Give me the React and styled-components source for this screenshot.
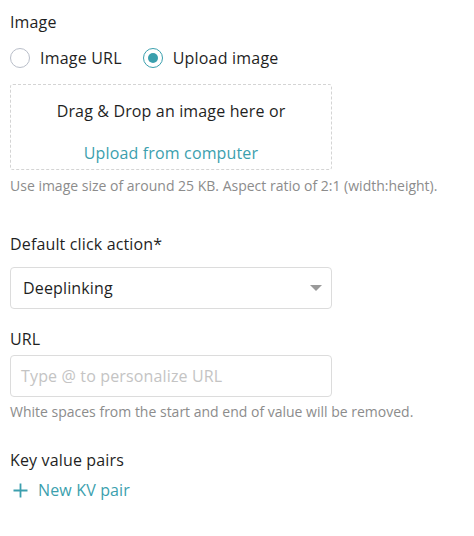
import React from "react";
import styled, { createGlobalStyle } from "styled-components";

const Global = createGlobalStyle`
  html, body { margin: 0; padding: 0; background: #fff; }
  body { font-family: "Open Sans", "Noto Sans", sans-serif; color: #1f1f1f; }
  * { box-sizing: border-box; }
`;

const Page = styled.div`
  width: 474px;
  height: 536px;
  padding: 12px 0 0 10px;
  display: flex;
  flex-direction: column;
`;

const Section = styled.div`
  display: flex;
  flex-direction: column;
  margin-top: ${(p) => p.$mt || 0}px;
`;

const Label = styled.div`
  font-size: 16px;
  line-height: 20px;
  letter-spacing: 0.15px;
  color: #1f1f1f;
  margin-bottom: ${(p) => p.$mb || 0}px;
`;

const RadioRow = styled.div`
  display: flex;
  align-items: center;
  gap: 21px;
  height: 32px;
  margin: 10px 0;
`;

const RadioOption = styled.label`
  display: flex;
  align-items: center;
  gap: 10px;
  font-size: 16px;
  line-height: 20px;
  letter-spacing: 0.2px;
  color: #1f1f1f;
`;

const RadioCircle = styled.span`
  width: 20px;
  height: 20px;
  border-radius: 50%;
  border: 1.5px solid ${(p) => (p.$checked ? "#3a9fad" : "#b9bec9")};
  display: flex;
  align-items: center;
  justify-content: center;
  &::after {
    content: "";
    width: 10px;
    height: 10px;
    border-radius: 50%;
    background: #3a9fad;
    display: ${(p) => (p.$checked ? "block" : "none")};
  }
`;

const DropZone = styled.div`
  width: 322px;
  height: 86px;
  border: 1px dashed #d4d4d4;
  border-radius: 3px;
  display: flex;
  flex-direction: column;
  align-items: center;
  padding-top: 16px;
  gap: 22px;
`;

const DropText = styled.div`
  font-size: 16px;
  line-height: 20px;
  letter-spacing: 0.15px;
  color: #1f1f1f;
`;

const LinkText = styled.span`
  font-size: 16px;
  line-height: 20px;
  letter-spacing: 0.15px;
  color: #3c9fae;
`;

const Help = styled.div`
  font-size: 14px;
  line-height: 18px;
  color: #8c8c8c;
  margin-top: ${(p) => p.$mt || 0}px;
  white-space: nowrap;
`;

const Field = styled.div`
  width: 322px;
  height: 42px;
  border: 1px solid #dcdcdc;
  border-radius: 4px;
  display: flex;
  align-items: center;
  justify-content: space-between;
  padding: 0 9px 0 ${(p) => (p.$placeholder ? 10 : 12)}px;
  font-size: 16px;
  letter-spacing: 0.15px;
  color: ${(p) => (p.$placeholder ? "#c4c4c4" : "#1f1f1f")};
`;

const Caret = styled.span`
  width: 0;
  height: 0;
  border-left: 6.5px solid transparent;
  border-right: 6.5px solid transparent;
  border-top: 6px solid #9a9a9a;
`;

const AddLink = styled.div`
  display: flex;
  align-items: center;
  gap: 10px;
  padding-left: 3px;
  margin-top: 10px;
  font-size: 16px;
  line-height: 20px;
  letter-spacing: 0.15px;
  color: #3c9fae;
`;

export default function App() {
  return (
    <>
      <Global />
      <Page>
        <Section>
          <Label>Image</Label>
          <RadioRow>
            <RadioOption>
              <RadioCircle />
              Image URL
            </RadioOption>
            <RadioOption>
              <RadioCircle $checked />
              Upload image
            </RadioOption>
          </RadioRow>
          <DropZone>
            <DropText>Drag &amp; Drop an image here or</DropText>
            <LinkText>Upload from computer</LinkText>
          </DropZone>
          <Help $mt={7}>Use image size of around 25 KB. Aspect ratio of 2:1 (width:height).</Help>
        </Section>
        <Section $mt={39}>
          <Label $mb={13}>Default click action*</Label>
          <Field>
            Deeplinking
            <Caret />
          </Field>
        </Section>
        <Section $mt={20}>
          <Label $mb={6}>URL</Label>
          <Field $placeholder>Type @ to personalize URL</Field>
          <Help $mt={6}>White spaces from the start and end of value will be removed.</Help>
        </Section>
        <Section $mt={29}>
          <Label>Key value pairs</Label>
          <AddLink>
            <svg width="15" height="15" viewBox="0 0 15 15" fill="none" stroke="#3c9fae" strokeWidth="1.8">
              <path d="M7.5 0.5v14M0.5 7.5h14" />
            </svg>
            New KV pair
          </AddLink>
        </Section>
      </Page>
    </>
  );
}
